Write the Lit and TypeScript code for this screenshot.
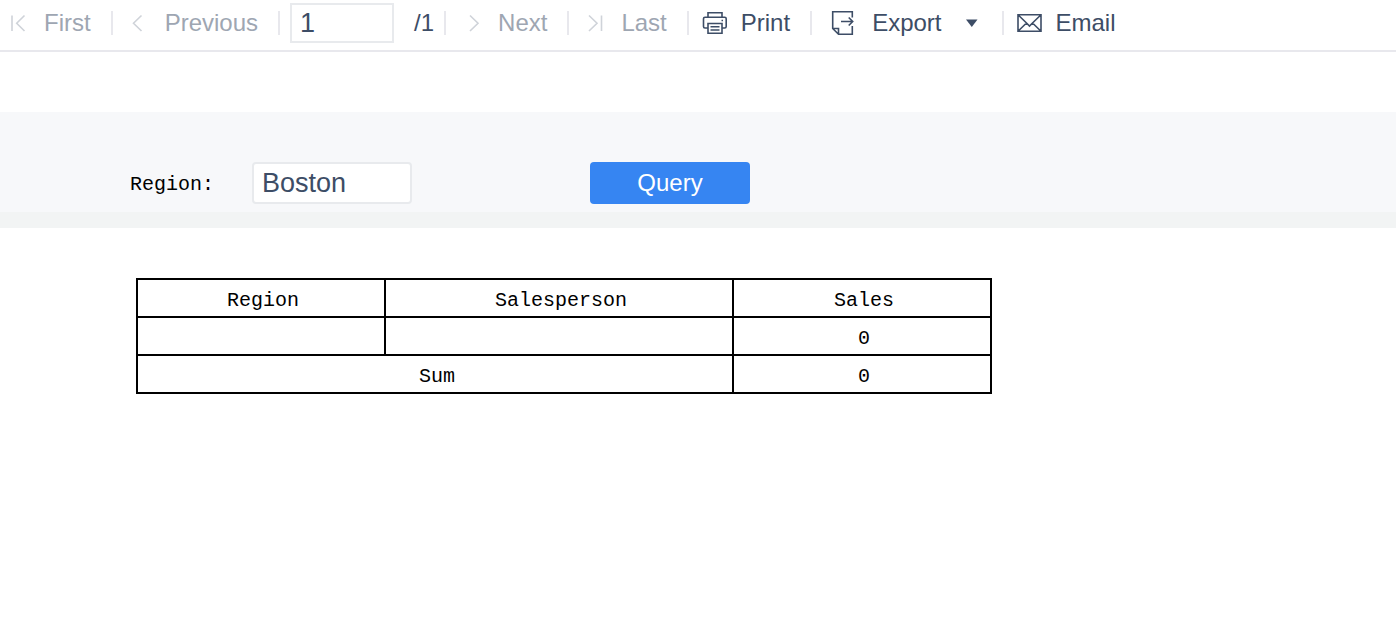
import { LitElement, html, css, svg } from "lit";
import { customElement, property, state } from "lit/decorators.js";

const icons = {
  first: svg`<path class="faint" d="M8 15.5V31M20.500 15.5L12.700 23.2L20.500 31"/>`,
  previous: svg`<path class="faint" d="M16.500 15.5L8.500 23.2L16.500 31"/>`,
  next: svg`<path class="faint" d="M12 15.5L20 23.2L12 31"/>`,
  last: svg`<path class="faint" d="M8 15.5L16 23.2L8 31M20.5 15.5V31"/>`,
  print: svg`<path d="M7 17.3V12.7H21V17.3M7 28H4Q2.500 28 2.500 26.500V18.800Q2.500 17.300 4 17.300H23.700Q25.200 17.300 25.200 18.800V26.500Q25.200 28 23.700 28H21M7 23.500H21V33.300H7ZM9.500 26.700H18.500M9.500 30H18.500M20.500 20.500H22"/>`,
  export: svg`<path d="M24.300 17.500V11.700H4.700V28.500L10.500 34.300H24.300V26M4.700 28.500H10.500V34.300M13 21.500H24.500M20.700 17.500L24.700 21.500L20.700 25.500"/>`,
  email: svg`<path d="M2 14.700H25V31.300H2ZM2 14.700L10.500 23L13.500 26L16.500 23L25 14.700M2 31.300L10.500 23M25 31.300L16.500 23"/>`,
};

@customElement("tool-button")
class ToolButton extends LitElement {
  @property() icon: keyof typeof icons = "first";
  @property({ type: Boolean }) disabled = false;
  @property({ type: Boolean }) menu = false;

  static styles = css`
    :host { display: block; flex: none; }
    button {
      display: flex;
      align-items: center;
      gap: 12px;
      height: 46px;
      padding: 0 20px 0 12px;
      border: 0;
      background: none;
      color: #3d4d66;
      font: 24px/28px "Liberation Sans", Arial, sans-serif;
      white-space: nowrap;
    }
    :host([edge]) button { padding-left: 4px; }
    button:disabled { color: #9ea6b2; }
    .menu { gap: 16px; padding: 0 24px 0 16px; }
    .label-caret { display: flex; align-items: center; gap: 24px; }
    svg { display: block; flex: none; fill: none; stroke: #3d4d66; stroke-width: 1.6; }
    .faint { stroke: #cfd3d9; }
    .caret { fill: #3d4d66; stroke: none; }
  `;

  render() {
    return html`<button type="button" class=${this.menu ? "menu" : ""} ?disabled=${this.disabled}>
      <svg width="28" height="46" viewBox="0 0 28 46" aria-hidden="true">${icons[this.icon]}</svg>
      <span class="label-caret"><slot></slot>${this.menu
        ? html`<svg class="caret" width="12" height="8" viewBox="0 0 12 8" aria-hidden="true"><path d="M0 0.500H11.500L5.800 8Z"/></svg>`
        : ""}</span>
    </button>`;
  }
}

@customElement("app-root")
class AppRoot extends LitElement {
  @state() private region = "Boston";

  static styles = css`
    :host {
      display: block;
      min-height: 100vh;
      background: #fff;
      color: #000;
      font-family: "Liberation Sans", Arial, sans-serif;
    }
    * { box-sizing: border-box; }
    .toolbar {
      display: flex;
      align-items: center;
      padding-bottom: 4px;
      border-bottom: 2px solid #e8e8ed;
    }
    .sep { flex: none; width: 2px; height: 24px; background: #e8e8ed; }
    input {
      border: 2px solid #e8eaed;
      background: #fff;
      color: #3d4d66;
      font: 27px/32px "Liberation Sans", Arial, sans-serif;
      padding: 0 8px;
      outline: 0;
    }
    .pager {
      display: flex;
      align-items: center;
      gap: 20px;
      padding: 0 10px;
      color: #3d4d66;
      font-size: 24px;
      line-height: 28px;
    }
    .page { width: 104px; height: 40px; }
    .query {
      display: flex;
      align-items: center;
      margin-top: 60px;
      padding: 50px 0 8px 130px;
      background: #f7f8fa;
      border-bottom: 16px solid #f2f4f4;
    }
    .mono { font: 20px/24px "Liberation Mono", monospace; }
    .query label { width: 122px; padding-top: 4px; }
    .region { width: 160px; height: 42px; border-radius: 4px; }
    .submit {
      width: 160px;
      height: 42px;
      margin-left: 178px;
      border: 0;
      border-radius: 4px;
      background: #3685f2;
      color: #fff;
      font: 24px/28px "Liberation Sans", Arial, sans-serif;
    }
    .report { padding: 50px 136px; }
    table { width: 856px; table-layout: fixed; border-collapse: collapse; }
    .c1 { width: 248px; }
    .c2 { width: 348px; }
    th, td {
      height: 38px;
      padding: 6px 0 0 4px;
      border: 2px solid #000;
      font-weight: 400;
      text-align: center;
    }
  `;

  render() {
    const sep = html`<span class="sep"></span>`;
    return html`
      <header class="toolbar">
        <tool-button edge icon="first" disabled>First</tool-button>${sep}
        <tool-button icon="previous" disabled>Previous</tool-button>${sep}
        <div class="pager">
          <input class="page" aria-label="Page" value="1" /><span>/1</span>
        </div>${sep}
        <tool-button icon="next" disabled>Next</tool-button>${sep}
        <tool-button icon="last" disabled>Last</tool-button>${sep}
        <tool-button icon="print">Print</tool-button>${sep}
        <tool-button icon="export" menu>Export</tool-button>${sep}
        <tool-button icon="email">Email</tool-button>
      </header>
      <form class="query" @submit=${(e: Event) => e.preventDefault()}>
        <label class="mono" for="region">Region:</label>
        <input class="region" id="region" .value=${this.region}
          @input=${(e: Event) => (this.region = (e.target as HTMLInputElement).value)} />
        <button class="submit">Query</button>
      </form>
      <main class="report">
        <table class="mono">
          <colgroup><col class="c1" /><col class="c2" /><col /></colgroup>
          <thead><tr><th>Region</th><th>Salesperson</th><th>Sales</th></tr></thead>
          <tbody>
            <tr><td></td><td></td><td>0</td></tr>
            <tr><td colspan="2">Sum</td><td>0</td></tr>
          </tbody>
        </table>
      </main>
    `;
  }
}
